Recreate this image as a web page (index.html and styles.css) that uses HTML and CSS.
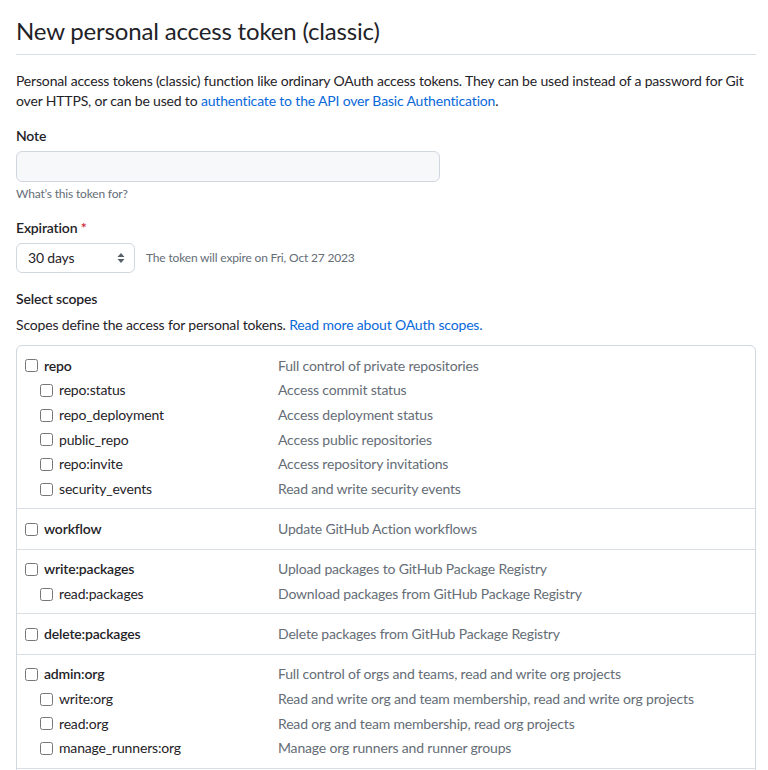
FILE: index.html
```html
<!DOCTYPE html>
<html lang="en">
<head>
<meta charset="utf-8">
<title>New personal access token (classic)</title>
<link rel="stylesheet" href="styles.css">
</head>
<body>
<main class="page">
  <div class="subhead">
    <h1 class="subhead-heading">New personal access token (classic)</h1>
  </div>
  <p class="intro">Personal access tokens (classic) function like ordinary OAuth access tokens. They can be used instead of a password for Git over HTTPS, or can be used to <a href="#">authenticate to the API over Basic Authentication</a>.</p>

  <div class="form-group">
    <label class="form-label">Note</label>
    <input class="form-input" type="text">
    <p class="note">What’s this token for?</p>
  </div>

  <div class="form-group">
    <label class="form-label">Expiration <span class="required">*</span></label>
    <div class="expiry-row">
      <div class="select">
        <span>30 days</span>
        <svg class="select-arrow" width="8" height="12" viewBox="0 0 8 12"><path d="M4 1 L7.5 5 H0.5 Z M4 11 L7.5 7 H0.5 Z" fill="#57606a"/></svg>
      </div>
      <span class="note-inline">The token will expire on Fri, Oct 27 2023</span>
    </div>
  </div>

  <div class="form-group scopes-group">
    <label class="form-label">Select scopes</label>
    <p class="scopes-desc">Scopes define the access for personal tokens. <a href="#">Read more about OAuth scopes.</a></p>
  </div>

  <div class="scopes">
    <div class="scope-row">
      <div class="scope-line"><label class="name top"><input type="checkbox">repo</label><span class="desc">Full control of private repositories</span></div>
      <div class="scope-line"><label class="name sub"><input type="checkbox">repo:status</label><span class="desc">Access commit status</span></div>
      <div class="scope-line"><label class="name sub"><input type="checkbox">repo_deployment</label><span class="desc">Access deployment status</span></div>
      <div class="scope-line"><label class="name sub"><input type="checkbox">public_repo</label><span class="desc">Access public repositories</span></div>
      <div class="scope-line"><label class="name sub"><input type="checkbox">repo:invite</label><span class="desc">Access repository invitations</span></div>
      <div class="scope-line"><label class="name sub"><input type="checkbox">security_events</label><span class="desc">Read and write security events</span></div>
    </div>
    <div class="scope-row">
      <div class="scope-line"><label class="name top"><input type="checkbox">workflow</label><span class="desc">Update GitHub Action workflows</span></div>
    </div>
    <div class="scope-row">
      <div class="scope-line"><label class="name top"><input type="checkbox">write:packages</label><span class="desc">Upload packages to GitHub Package Registry</span></div>
      <div class="scope-line"><label class="name sub"><input type="checkbox">read:packages</label><span class="desc">Download packages from GitHub Package Registry</span></div>
    </div>
    <div class="scope-row">
      <div class="scope-line"><label class="name top"><input type="checkbox">delete:packages</label><span class="desc">Delete packages from GitHub Package Registry</span></div>
    </div>
    <div class="scope-row">
      <div class="scope-line"><label class="name top"><input type="checkbox">admin:org</label><span class="desc">Full control of orgs and teams, read and write org projects</span></div>
      <div class="scope-line"><label class="name sub"><input type="checkbox">write:org</label><span class="desc">Read and write org and team membership, read and write org projects</span></div>
      <div class="scope-line"><label class="name sub"><input type="checkbox">read:org</label><span class="desc">Read org and team membership, read org projects</span></div>
      <div class="scope-line"><label class="name sub"><input type="checkbox">manage_runners:org</label><span class="desc">Manage org runners and runner groups</span></div>
    </div>
    <div class="scope-row">
      <div class="scope-line"><label class="name top"><input type="checkbox">admin:public_key</label><span class="desc">Full control of user public keys</span></div>
    </div>
  </div>
</main>
</body>
</html>
```
FILE: styles.css
```css
* { box-sizing: border-box; }
html, body { margin: 0; background: #fff; }
body {
  font-family: Lato, "Noto Sans", sans-serif;
  font-size: 14px;
  line-height: 20px;
  letter-spacing: -0.012em;
  color: #1f2328;
}
.page {
  padding: 0 12px 0 16px;
}
a { color: #0969da; text-decoration: none; }

.subhead {
  padding-top: 13px;
  padding-bottom: 5px;
  border-bottom: 1px solid #d8dee4;
}
.subhead-heading {
  margin: 0;
  font-size: 24px;
  font-weight: 400;
  line-height: 36px;
}
.intro {
  margin: 16px 0 15px;
}
.form-group { margin-bottom: 16px; }
.form-label {
  display: block;
  font-weight: 600;
  margin-bottom: 5px;
}
.required { color: #cf222e; }
.form-input {
  display: block;
  width: 424px;
  height: 31px;
  margin: 0;
  padding: 5px 12px;
  background: #f6f8fa;
  border: 1px solid #d0d7de;
  border-radius: 6px;
  font: inherit;
}
.note {
  margin: 4px 0 0;
  font-size: 12px;
  line-height: 16px;
  color: #656d76;
}
.expiry-row {
  display: flex;
  align-items: center;
  gap: 11px;
}
.select {
  width: 119px;
  height: 30px;
  display: flex;
  align-items: center;
  justify-content: space-between;
  padding: 0 9px 0 11px;
  border: 1px solid #d0d7de;
  border-radius: 6px;
  background: #fff;
}
.note-inline {
  font-size: 12px;
  color: #656d76;
}
.scopes-group { margin-bottom: 10px; }
.scopes-group .form-label { margin-bottom: 6px; }
.scopes-desc { margin: 0; }

.scopes {
  border: 1px solid #d0d7de;
  border-radius: 6px;
}
.scope-row {
  padding: 7.5px 8px 7px;
  border-top: 1px solid #d8dee4;
}
.scope-row:first-child { border-top: 0; }
.scope-line {
  display: grid;
  grid-template-columns: 253px 1fr;
  align-items: center;
  height: 24.67px;
}
.name {
  display: flex;
  align-items: center;
}
.name input {
  width: 13px;
  height: 13px;
  margin: 0 6px 0 0;
}
.name.top { font-weight: 600; }
.name.sub { padding-left: 15px; }
.desc { color: #656d76; }
```
